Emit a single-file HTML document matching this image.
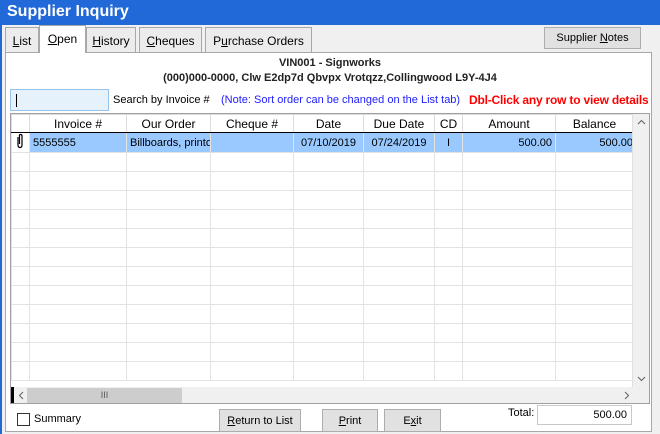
<!DOCTYPE html><html><head><style>
*{box-sizing:border-box;margin:0;padding:0}
body{width:660px;height:434px;background:#f0f0f0;font-family:"Liberation Sans",Arial,sans-serif;font-size:12px;position:relative;overflow:hidden}
.a{position:absolute}
.title{left:0;top:0;width:660px;height:25px;background:#2169d9;color:#fff;font-weight:bold;font-size:16px;padding:3px 0 0 7px}
.tab{top:27px;height:25px;border:1px solid #a8a8a8;border-bottom:none;background:#ececec;font-size:12px;text-align:center;padding-top:6px}
.panel{left:5px;top:52px;width:647px;height:380px;background:#fff;border:1px solid #a8a8a8}
.btn{background:#e1e1e1;border:1px solid #adadad;text-align:center;font-size:11px}
table{border-collapse:collapse;table-layout:fixed}
td{border:1px solid #e3e3e3;height:19px;font-size:11px;overflow:hidden;white-space:nowrap;padding:0 3px}
.h td{background:#fff;font-size:12px;text-align:center;border-color:#dcdcdc;border-bottom:1px solid #000;height:18px}
.s td{background:#99c9ff}
</style></head><body>
<div class="a" style="left:0;top:0;width:2px;height:434px;background:#2169d9"></div>
<div class="a title">Supplier Inquiry</div>
<div class="a panel"></div>
<div class="a tab" style="left:5px;width:34px"><u>L</u>ist</div>
<div class="a tab" style="left:39px;top:25px;height:28px;width:47px;background:#fff;padding-top:6px"><u>O</u>pen</div>
<div class="a tab" style="left:86px;width:50px"><u>H</u>istory</div>
<div class="a tab" style="left:139px;width:63px"><u>C</u>heques</div>
<div class="a tab" style="left:205px;width:107px">P<u>u</u>rchase Orders</div>
<div class="a btn" style="left:544px;top:27px;width:97px;height:22px;padding-top:4px">Supplier <u>N</u>otes</div>
<div class="a" style="left:0;width:660px;top:57px;text-align:center;font-weight:bold;font-size:11px;color:#222">VIN001 - Signworks</div>
<div class="a" style="left:0;width:660px;top:72px;text-align:center;font-weight:bold;font-size:11px;color:#222">(000)000-0000, Clw E2dp7d Qbvpx Vrotqzz,Collingwood L9Y-4J4</div>
<div class="a" style="left:10px;top:89px;width:99px;height:22px;background:#e5f1fb;border:1px solid #99c4ea"><div style="position:absolute;left:5px;top:4px;width:1px;height:13px;background:#000"></div></div>
<div class="a" style="left:113px;top:94px;font-size:11px">Search by Invoice #</div>
<div class="a" style="left:221px;top:94px;font-size:11px;color:#2020ff">(Note: Sort order can be changed on the List tab)</div>
<div class="a" style="left:469px;top:93px;font-size:12px;color:#ff0000;font-weight:bold;letter-spacing:-0.2px">Dbl-Click any row to view details</div>
<div class="a" style="left:10px;top:113px;width:640px;height:291px;border:1px solid #a0a0a0;background:#fff;overflow:hidden">
<table style="width:622px">
<colgroup><col style="width:18px"><col style="width:97px"><col style="width:84px"><col style="width:83px"><col style="width:70px"><col style="width:71px"><col style="width:28px"><col style="width:93px"><col style="width:78px"></colgroup>
<tr class="h"><td></td><td>Invoice #</td><td>Our Order</td><td>Cheque #</td><td>Date</td><td>Due Date</td><td>CD</td><td>Amount</td><td>Balance</td></tr>
<tr class="s"><td style="background:#fff;padding:0 3px"><svg width="10" height="16" viewBox="0 0 10 16"><path d="M3 4 V12 Q3 14.5 5 14.5 Q7 14.5 7 12 V3 Q7 1.5 5.5 1.5 Q4 1.5 4.5 3 V11" fill="none" stroke="#000" stroke-width="1.2"/></svg></td><td>5555555</td><td>Billboards, printouts</td><td></td><td style="text-align:center">07/10/2019</td><td style="text-align:center">07/24/2019</td><td style="text-align:center">I</td><td style="text-align:right">500.00</td><td style="text-align:right;padding-right:0">500.00</td></tr>
<tr><td></td><td></td><td></td><td></td><td></td><td></td><td></td><td></td><td></td></tr>
<tr><td></td><td></td><td></td><td></td><td></td><td></td><td></td><td></td><td></td></tr>
<tr><td></td><td></td><td></td><td></td><td></td><td></td><td></td><td></td><td></td></tr>
<tr><td></td><td></td><td></td><td></td><td></td><td></td><td></td><td></td><td></td></tr>
<tr><td></td><td></td><td></td><td></td><td></td><td></td><td></td><td></td><td></td></tr>
<tr><td></td><td></td><td></td><td></td><td></td><td></td><td></td><td></td><td></td></tr>
<tr><td></td><td></td><td></td><td></td><td></td><td></td><td></td><td></td><td></td></tr>
<tr><td></td><td></td><td></td><td></td><td></td><td></td><td></td><td></td><td></td></tr>
<tr><td></td><td></td><td></td><td></td><td></td><td></td><td></td><td></td><td></td></tr>
<tr><td></td><td></td><td></td><td></td><td></td><td></td><td></td><td></td><td></td></tr>
<tr><td></td><td></td><td></td><td></td><td></td><td></td><td></td><td></td><td></td></tr>
<tr><td></td><td></td><td></td><td></td><td></td><td></td><td></td><td></td><td></td></tr>
</table>
<div class="a" style="left:621px;top:0;width:17px;height:273px;background:#f0f0f0;border-left:1px solid #e0e0e0"><svg class="a" style="left:4px;top:5px" width="9" height="6"><path d="M1 5 L4.5 1.5 L8 5" fill="none" stroke="#606060"/></svg><svg class="a" style="left:4px;bottom:5px" width="9" height="6"><path d="M1 1 L4.5 4.5 L8 1" fill="none" stroke="#606060"/></svg></div>
<div class="a" style="left:0;top:273px;width:638px;height:17px;background:#f0f0f0"><div style="position:absolute;left:0;top:0;width:3px;height:17px;background:#000"></div><svg class="a" style="left:7px;top:4px" width="6" height="9"><path d="M5 1 L1.5 4.5 L5 8" fill="none" stroke="#606060"/></svg><div style="position:absolute;left:16px;top:1px;width:155px;height:15px;background:#cdcdcd;text-align:center;font-size:9px;color:#555;padding-top:2px">III</div><svg class="a" style="left:613px;top:4px" width="6" height="9"><path d="M1 1 L4.5 4.5 L1 8" fill="none" stroke="#606060"/></svg></div>
</div>
<div class="a" style="left:17px;top:413px;width:13px;height:13px;border:1px solid #333;background:#fff"></div>
<div class="a" style="left:34px;top:413px;font-size:11px">Summary</div>
<div class="a btn" style="left:219px;top:409px;width:82px;height:23px;padding-top:5px"><u>R</u>eturn to List</div>
<div class="a btn" style="left:322px;top:409px;width:56px;height:23px;padding-top:5px"><u>P</u>rint</div>
<div class="a btn" style="left:384px;top:409px;width:57px;height:23px;padding-top:5px">E<u>x</u>it</div>
<div class="a" style="left:508px;top:407px;font-size:11px">Total:</div>
<div class="a" style="left:537px;top:405px;width:95px;height:20px;border:1px solid #c8c8c8;background:#fff;text-align:right;padding:3px 4px 0 0;font-size:11px">500.00</div>
</body></html>
